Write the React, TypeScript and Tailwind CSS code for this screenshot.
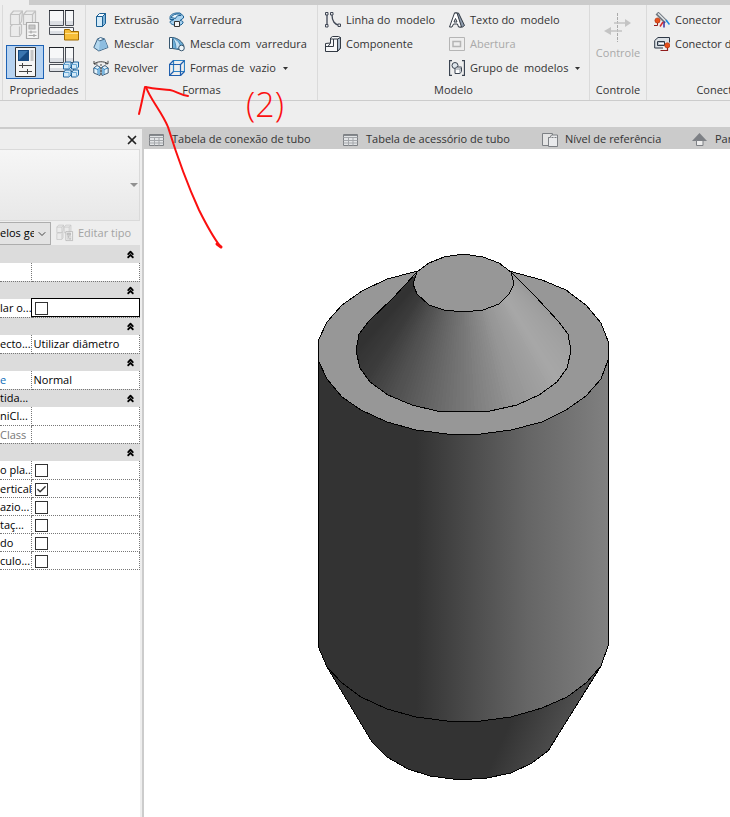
import React from 'react';
import { Check, ChevronDown, ChevronsUp, X } from 'lucide-react';
import clsx from 'clsx';

type Row =
  | { kind: 'header'; label: string }
  | { kind: 'text'; label: string; value: string; tone?: string }
  | { kind: 'check'; label: string; checked?: boolean; active?: boolean };

const rows: Row[] = [
  { kind: 'header', label: '' },
  { kind: 'text', label: '', value: '' },
  { kind: 'header', label: '' },
  { kind: 'check', label: 'lar o...', active: true },
  { kind: 'header', label: '' },
  { kind: 'text', label: 'ecto...', value: 'Utilizar diâmetro' },
  { kind: 'header', label: '' },
  { kind: 'text', label: 'e', value: 'Normal', tone: 'text-[#0a6ab8]' },
  { kind: 'header', label: 'tida...' },
  { kind: 'text', label: 'niCl...', value: '' },
  { kind: 'text', label: 'Class', value: '', tone: 'text-[#777777]' },
  { kind: 'header', label: '' },
  { kind: 'check', label: 'o pla...' },
  { kind: 'check', label: 'ertical', checked: true },
  { kind: 'check', label: 'azio...' },
  { kind: 'check', label: 'taç...' },
  { kind: 'check', label: 'do' },
  { kind: 'check', label: 'culo...' },
];

const icons = {
  extrusion: (
    <g stroke="#1b6094" strokeLinejoin="round">
      <path d="M3.500 4.500h6v10h-6z" fill="#d3eaf8" />
      <path d="M3.500 4.500l3-3h6l-3 3z" fill="#f4faff" />
      <path d="M9.500 4.500l3-3v10l-3 3z" fill="#7fb4da" />
    </g>
  ),
  blend: (
    <g stroke="#3d6485" strokeLinejoin="round">
      <path d="M4.500 3L.8 11.500l5 3.500L15 11.500 11.500 3z" fill="#b4d8ef" />
      <path d="M7 5l4.500-2L14.500 11.300 6 14.500z" fill="#8dbde0" stroke="none" />
      <path d="M4.500 3l3-1.500 4 1.500-5 2z" fill="#eaf5fc" />
    </g>
  ),
  revolve: (
    <g fill="none" stroke="#2f4a63" strokeWidth="0.900">
      <path d="M1 4C4 1.200 11 1 14.500 3.500M1 1v3h3.500M15 .8v3h-3" stroke="#333" />
      <path d="M.8 8L4 5.500l3 1.500v8.500L.8 13zM15.200 8L12 5.500 9 7v8.500l6.200-2.500z" fill="#e3f2fb" />
      <path d="M.8 8L5 9.500 7 7M15.200 8L11 9.500 9 7M5 9.500v5M11 9.500v5" stroke="#2576b4" />
      <path d="M5 9.500L7 7.500v7.500l-2-.5zM11 9.500L9 7.500v7.500l2-.5z" fill="#79b6e0" stroke="none" />
      <path d="M8 4v12" stroke="#333" strokeDasharray="2 1" />
    </g>
  ),
  sweep: (
    <g stroke="#1b6094" strokeLinejoin="round">
      <path d="M1 5.500c0-3 4-4.500 7-4.500h3l3.500 3v2L11 8.500c2 0 3.500 1 3 2.500l-2 2H5C1 12 1 10 1 9.500l4-2L1 7.500z" fill="#a9d2ee" />
      <path d="M2 5.500C3 3 7 1.500 10.500 2l1.500 1.500C9 3 7 4.500 6.500 6.500z" fill="#e9f5fc" />
      <path d="M5.500 9.500h5v5h-5z" fill="#f5f5f5" stroke="#333" />
    </g>
  ),
  sweptBlend: (
    <g stroke="#36566f">
      <path d="M.5 1.500h3v11h-3z" fill="#f3f8fb" />
      <path d="M3.500 1.500C9 2 14 6 15 10.500l-5 3-6.500-1z" fill="#6db0da" />
      <path d="M3.500 2C6 5 7 9 7 13l5-1.500C11 7 8 3 3.500 2z" fill="#c7e2f3" stroke="#4f8db8" />
      <circle cx="12.500" cy="12" r="2.800" fill="#eef5f9" />
    </g>
  ),
  voidForm: (
    <g stroke="#1f5fae" fill="none" strokeWidth="1.200">
      <path d="M4.500.5h11v11h-11z" stroke="#2e82c4" />
      <path d="M.5 4.500h11v11H.5z" />
      <path d="M.5 4.500l4-4M11.500 4.500l4-4M11.500 15.500l4-4M.5 15.500l4-4" />
    </g>
  ),
  modelLine: (
    <g fill="#eee" stroke="#414856">
      <path d="M2 3v10M7 3c0 6 3 10 7 10" fill="none" strokeWidth="1.300" />
      <path d="M.5.5h2.500v2.500H.5zM.5 12.500h2.500V15H.5zM5.500.5H8v2.500H5.500zM13 12h2.500v2.500H13z" />
    </g>
  ),
  component: (
    <g stroke="#333a44" strokeLinejoin="round">
      <path d="M.5 7.500L5.500 7V2l2-1.500h6l2 1V12l-3 3.500H.5z" fill="#f7f8f9" />
      <path d="M12.500 3v12.500l3-3.500V1.500z" fill="#aebccb" />
      <path d="M.5 10.500h8V3h4M5.500 3h3M5.500 7L3 10.500" fill="none" />
    </g>
  ),
  modelText: (
    <g stroke="#333a44" strokeLinejoin="round">
      <path d="M5.500 1h4l6 12.500-2 1.500h-3L6 8z" fill="#8e9cad" />
      <path d="M5.500 1h2.500l4.500 14h-3L8.500 12h-4L3 15H.5z" fill="#fff" />
      <path d="M6.500 6.500L5 10h3z" fill="#eee" />
    </g>
  ),
  opening: (
    <g stroke="#b5b5b5" fill="none">
      <path d="M.5 1.500h15v13H.5z" />
      <path d="M4 5.500h7.500v5H4z" strokeWidth="1.500" />
    </g>
  ),
  modelGroup: (
    <g fill="none" stroke="#3a4350">
      <path d="M3 .5H.5v15H3M13 .5h2.500v15H13" strokeWidth="1.300" />
      <circle cx="6" cy="5.500" r="3" fill="#dfe6ec" />
      <path d="M6 9l1.500-2h5v4.500L11 13.500H6z" fill="#fff" />
      <path d="M6 9h5v4.500M11 9l1.500-2" stroke="#8a939e" />
    </g>
  ),
  pipeConnector: (
    <g>
      <path d="M3 1l9 9" stroke="#70777f" strokeWidth="4" />
      <path d="M4 1.500l8 8" stroke="#e4e8eb" strokeWidth="1.500" />
      <path d="M12 8l3.500 4.500" stroke="#1b87dd" strokeWidth="1.500" />
      <path d="M10 9.500v6" stroke="#3730a3" strokeWidth="1.500" />
      <path d="M9 10l-3 4.500" stroke="#d92c2c" strokeWidth="1.500" />
      <path d="M3.500 9v4.500H0" stroke="#8f1b1b" fill="none" />
      <circle cx="3.500" cy="8.500" r="2.600" fill="#e8501c" stroke="#a5310e" strokeWidth=".6" />
    </g>
  ),
  ductConnector: (
    <g>
      <path d="M.7 4.500L4 1.500h11.500v5M.7 4.500v7.500H9" fill="#dbe0e5" stroke="#2e3846" />
      <path d="M3.500 5.500h7v4h-7z" fill="#b4bcc5" stroke="#2e3846" />
      <path d="M5 7.500h5" stroke="#fff" />
      <path d="M13.500 10v4.500H6.500" stroke="#8f1b1b" fill="none" strokeWidth="1.200" />
      <circle cx="13.300" cy="9.300" r="2.600" fill="#e8501c" stroke="#a5310e" strokeWidth=".6" />
    </g>
  ),
  schedule: (
    <g stroke="#7d8084">
      <path d="M.5 2.500h14v11H.5z" fill="#e2e4e6" />
      <path d="M.5 5.500h14M.5 8.500h14M.5 11h14M5.500 5v8.500M10 5v8.500" stroke="#a4a7ab" />
      <path d="M1 3.500h13" stroke="#85898d" />
    </g>
  ),
  level: (
    <g stroke="#7d8084">
      <path d="M.5 1.500h10v12H.5z" fill="#e4e4e4" />
      <path d="M6.500 14.500V5.500H8L9.500 3h6v11.500z" fill="#e9eaec" />
      <path d="M6.500 5.500h9" strokeDasharray="2 1" />
    </g>
  ),
  home: (
    <g>
      <path d="M7.500 1L0 9h15z" fill="#7d8085" />
      <path d="M4.500 8.500h6.500v5H4.500z" fill="#ececec" stroke="#7d8085" />
    </g>
  ),
};

type IconName = keyof typeof icons;

function Icon({ name }: { name: IconName }) {
  return (
    <svg viewBox="0 0 16 16" className="h-4 w-4 shrink-0" fill="none" aria-hidden="true">
      {icons[name]}
    </svg>
  );
}

function RibbonButton({ icon, label, menu, disabled }: { icon: IconName; label: string; menu?: boolean; disabled?: boolean }) {
  return (
    <button
      type="button"
      disabled={disabled}
      className={clsx('flex h-6 items-center gap-[5px] whitespace-pre', disabled && 'text-[#a9a9a9]')}
    >
      <Icon name={icon} />
      {label}
      {menu && (
        <svg viewBox="0 0 5 3" className="ml-0.5 h-[3px] w-[5px]" aria-hidden="true">
          <path d="M0 0h5L2.500 3z" fill="#333" />
        </svg>
      )}
    </button>
  );
}

function Panel({ title, className, children }: { title: string; className: string; children: React.ReactNode }) {
  return (
    <section className={clsx('flex shrink-0 flex-col border-r border-[#dadada]', className)}>
      <div className="flex h-[76px] items-start pt-[3px]">{children}</div>
      <h2 className="text-center leading-[18px]">{title}</h2>
    </section>
  );
}

function Windows({ children }: { children?: React.ReactNode }) {
  return (
    <svg viewBox="0 0 32 32" className="h-8 w-8" aria-hidden="true">
      <g stroke="#4a4e56" fill="#f6f7f8">
        <path d="M1.500 1.500h14v15h-14zM17.500 1.500h8v15h-8zM1.500 18.500h24v7h-24z" />
        <path d="M2 12h13v4H2zM18 12h7v4h-7zM2 22h23v3H2z" fill="#dcdfe4" stroke="none" />
        <path d="M1 1.500h15M17 1.500h9" stroke="#1d2026" />
      </g>
      {children}
    </svg>
  );
}

function Families({ className }: { className: string }) {
  return (
    <svg viewBox="0 0 32 32" className={className} aria-hidden="true">
      <g stroke="#c2c2c2" fill="#ebebeb" strokeLinejoin="round" strokeWidth="1.200">
        <path d="M1.500 5.500l3-3.500h9l-1 10.500-2 3h-9zM14.500 5.500L17.500 2h9v11l-3 2.500h-9zM1.500 17.500l2-2h9v9l-2 3h-9z" />
        <path d="M1.500 5.500h9v10M10.500 5.500l3-3.500M14.500 5.500h9v9M23.500 5.500l3-3.500M10.500 17.500v9" fill="none" />
        <path d="M17.500 13.500h12v16h-12z" fill="#f4f4f4" stroke="#a8a8a8" />
        <path d="M20 16h6v4h-6z" fill="#c8c8c8" stroke="#b0b0b0" />
        <path d="M19.500 23h8M19.500 26.500h8M22 21.500v3M25 25v3" stroke="#a8a8a8" />
      </g>
    </svg>
  );
}

function PropertiesPanel() {
  return (
    <div className="grid grid-cols-2 gap-x-[3px] gap-y-[3px] pl-[3px]">
      <button type="button" disabled aria-label="Categoria e parâmetros" className="flex h-[34px] w-[38px] items-center justify-center">
        <Families className="h-8 w-8" />
      </button>
      <button type="button" aria-label="Tipos de família" className="flex h-[34px] w-[38px] items-center pl-px">
        <Windows>
          <path d="M16.500 20.500h5l1.500 2h7.500v8.500h-14z" fill="#f6bd38" stroke="#a06a00" />
          <path d="M17 24.500h13" stroke="#ffe08a" />
        </Windows>
      </button>
      <button
        type="button"
        aria-label="Painel de propriedades"
        className="flex h-[34px] w-[38px] items-center justify-center border border-[#1d62b5] bg-[#b7d3f1]"
      >
        <svg viewBox="0 0 24 32" className="h-8 w-6" aria-hidden="true">
          <path d="M2.500 1.500h20v29h-20z" fill="#f5f5f5" stroke="#333" />
          <path d="M5 4h11v11H5z" fill="#174b82" />
          <path d="M6 5h9l-9 9z" fill="#3a76b0" />
          <path d="M17.500 4h3v11h-3z" fill="#c5c5c5" />
          <path d="M6 19.500h13M6 25.500h13M9.500 17v5M14.500 23v5" stroke="#444" />
        </svg>
      </button>
      <button type="button" aria-label="Editor de famílias" className="flex h-[34px] w-[38px] items-center pl-px">
        <Windows>
          <g fill="#d5eaf8" stroke="#1e659f">
            <path d="M15.500 18.500l2-2.500h5.500v5l-2 2h-5.500zM23.500 18.500l2-2.500h5v5l-2 2h-5zM15.500 26.500l2-2.500h5.500v5l-2 2h-5.500zM23.500 26.500l2-2.500h5v5l-2 2h-5z" />
            <path d="M15.500 18.500H21v4.500M23.500 18.500h5v4.500M15.500 26.500H21V31M23.500 26.500h5V31" fill="none" stroke="#6aa9d6" />
          </g>
        </Windows>
      </button>
    </div>
  );
}

function Ribbon() {
  return (
    <header className="flex h-24 overflow-hidden border-b border-[#cccccc]">
      <div className="w-[3px] shrink-0 border-r border-[#dadada]" />
      <Panel title="Propriedades" className="w-[83px]">
        <PropertiesPanel />
      </Panel>
      <Panel title="Formas" className="w-[232px]">
        <div className="w-[83px] shrink-0 pl-[7px]">
          <RibbonButton icon="extrusion" label="Extrusão" />
          <RibbonButton icon="blend" label="Mesclar" />
          <RibbonButton icon="revolve" label="Revolver" />
        </div>
        <div>
          <RibbonButton icon="sweep" label="Varredura" />
          <RibbonButton icon="sweptBlend" label="Mescla com  varredura" />
          <RibbonButton icon="voidForm" label="Formas de  vazio" menu />
        </div>
      </Panel>
      <Panel title="Modelo" className="w-[272px]">
        <div className="w-[131px] shrink-0 pl-[7px]">
          <RibbonButton icon="modelLine" label="Linha do  modelo" />
          <RibbonButton icon="component" label="Componente" />
        </div>
        <div>
          <RibbonButton icon="modelText" label="Texto do  modelo" />
          <RibbonButton icon="opening" label="Abertura" disabled />
          <RibbonButton icon="modelGroup" label="Grupo de  modelos" menu />
        </div>
      </Panel>
      <Panel title="Controle" className="w-[57px]">
        <button type="button" disabled className="flex w-full flex-col items-center pt-1 text-[#a9a9a9]">
          <svg viewBox="0 0 32 32" className="h-8 w-8" fill="none" aria-hidden="true">
            <path d="M15.500 1v29" stroke="#aaa" strokeDasharray="3 1" />
            <path d="M12 11h12M20 19H8" stroke="#c4c4c4" strokeWidth="1.500" />
            <path d="M23 7l6 4-6 4zM9 15l-7 4 7 4z" fill="#c4c4c4" />
          </svg>
          <span className="leading-[18px]">Controle</span>
        </button>
      </Panel>
      <Panel title="Conectores" className="w-[158px]">
        <div className="pl-[7px]">
          <RibbonButton icon="pipeConnector" label="Conector" />
          <RibbonButton icon="ductConnector" label="Conector de  duto" />
        </div>
      </Panel>
    </header>
  );
}

function PropertyGrid() {
  return (
    <table className="w-full table-fixed border-collapse text-black">
      <colgroup>
        <col className="w-[31px]" />
        <col />
      </colgroup>
      <tbody>
        {rows.map((row, i) =>
          row.kind === 'header' ? (
            <tr key={i} className="h-[18px] bg-[#dcdcdc]">
              <th colSpan={2} scope="colgroup" className="p-0 font-normal">
                <div className="flex h-[17px] items-center justify-between pr-1">
                  <span>{row.label}</span>
                  <ChevronsUp className="h-[11px] w-[11px]" strokeWidth={4} />
                </div>
              </th>
            </tr>
          ) : (
            <tr key={i} className="h-[18px] bg-white">
              <th scope="row" className="overflow-hidden border-r border-b border-dotted border-[#777777] p-0 text-left font-normal whitespace-nowrap">
                <div className={clsx('h-[17px] leading-[18px]', row.kind === 'text' && row.tone)}>
                  {row.kind === 'check' ? <label htmlFor={`prop-${i}`}>{row.label}</label> : row.label}
                </div>
              </th>
              <td className="border-r border-b border-dotted border-[#777777] p-0">
                {row.kind === 'check' ? (
                  <div className={clsx('relative flex h-[17px] items-start pt-[3px] pl-[3px]', row.active && 'outline outline-black')}>
                    <input
                      id={`prop-${i}`}
                      type="checkbox"
                      defaultChecked={row.checked}
                      className="peer h-[13px] w-[13px] appearance-none border border-[#333333] bg-white"
                    />
                    <Check className="pointer-events-none absolute top-1 left-1 hidden h-[11px] w-[11px] text-[#333333] peer-checked:block" strokeWidth={3} />
                  </div>
                ) : (
                  <div className="h-[17px] pl-0.5 leading-[18px] whitespace-nowrap">{row.value}</div>
                )}
              </td>
            </tr>
          ),
        )}
      </tbody>
    </table>
  );
}

function Sidebar() {
  return (
    <aside className="w-36 shrink-0 border-t-2 border-r-2 border-[#cccccc]">
      <div className="flex h-5 items-center justify-end pt-px pr-[3px]">
        <button type="button" aria-label="Fechar">
          <X className="h-[14px] w-[14px] text-[#222222]" strokeWidth={3} />
        </button>
      </div>
      <div className="mr-[2px] flex h-[72px] items-center justify-end border border-l-0 border-[#dadada] bg-linear-to-b from-[#f6f6f6] to-[#e8e8e8]">
        <svg viewBox="0 0 8 4" className="mr-px h-1 w-2" aria-hidden="true">
          <path d="M0 0h8L4 4z" fill="#909090" />
        </svg>
      </div>
      <div className="flex h-6 items-center">
        <div className="relative w-[51px]">
          <select
            aria-label="Filtro"
            className="h-[23px] w-full appearance-none border border-l-0 border-[#adadad] bg-[#e3e3e3] pr-4 text-black"
          >
            <option>elos ge</option>
          </select>
          <ChevronDown className="pointer-events-none absolute top-1.5 right-[3px] h-3 w-3 text-[#444444]" />
        </div>
        <button type="button" disabled className="ml-[5px] flex items-center gap-1 whitespace-nowrap text-[#a3a3a3]">
          <Families className="h-[18px] w-[18px]" />
          Editar tipo
        </button>
      </div>
      <div className="mr-[2px] bg-white pb-[248px]">
        <PropertyGrid />
      </div>
    </aside>
  );
}

const tabs: { icon: IconName; label: string; width: string }[] = [
  { icon: 'schedule', label: 'Tabela de conexão de tubo', width: 'w-[194px]' },
  { icon: 'schedule', label: 'Tabela de acessório de tubo', width: 'w-[199px]' },
  { icon: 'level', label: 'Nível de referência', width: 'w-[150px]' },
  { icon: 'home', label: 'Parede', width: 'w-[80px]' },
];

// [angle around the cone, grey level]
const coneShades: [number, number][] = [
  [-40, 148],
  [0, 160],
  [30, 167],
  [60, 150],
  [90, 118],
  [120, 88],
  [150, 60],
  [175, 50],
  [220, 52],
];

function shadeAt(angle: number) {
  const next = coneShades.findIndex(([a]) => a >= angle);
  if (next <= 0) return coneShades[0][1];
  const [a0, s0] = coneShades[next - 1];
  const [a1, s1] = coneShades[next];
  return Math.round(s0 + ((angle - a0) / (a1 - a0)) * (s1 - s0));
}

function coneFacets() {
  const point = (deg: number, rx: number, ry: number, cy: number) => {
    const t = (deg * Math.PI) / 180;
    return `${(463.5 + rx * Math.cos(t)).toFixed(1)},${(cy + ry * Math.sin(t)).toFixed(1)}`;
  };
  const step = 2;
  const facets: { points: string; fill: string }[] = [];
  for (let a = -40; a < 220; a += step) {
    const s = shadeAt(a);
    facets.push({
      points: [point(a, 48, 27, 283), point(a + step + 1, 48, 27, 283), point(a + step + 1, 112, 66, 351), point(a, 112, 66, 351)].join(' '),
      fill: `rgb(${s},${s},${s})`,
    });
  }
  return facets;
}

const RIM_FRONT = '318,360 327,379 342,397 361,410 387,422 416,430 447,434 481,434 511,430 542,422 566,410 586,396 601,379 608,360';
const CONE = '356,351 360,368 370,382 388,395 412,405 437,411 463,412 490,411 517,405 539,395 557,382 567,368 571,351 568,334 558,321 535,296 511,272 417,272 393,298 369,321 359,334';

function Solid() {
  return (
    <svg viewBox="317 253 293 528" className="h-[528px] w-[293px] shrink-0" shapeRendering="crispEdges" role="img" aria-label="Modelo 3D">
      <defs>
        <linearGradient id="body">
          <stop offset="0.340" stopColor="#333" />
          <stop offset="0.440" stopColor="#404040" />
          <stop offset="0.720" stopColor="#656565" />
          <stop offset="1" stopColor="#808080" />
        </linearGradient>
        <linearGradient id="tip" gradientUnits="userSpaceOnUse" x1="510" y1="722" x2="590" y2="757">
          <stop offset="0" stopColor="#333" />
          <stop offset="1" stopColor="#606060" />
        </linearGradient>
        <clipPath id="cone">
          <polygon points={CONE} />
        </clipPath>
      </defs>
      <g stroke="#000" strokeLinejoin="round">
        <polygon
          fill="url(#tip)"
          points="327,667 372,742 387,757 408,769 430,776 453,779 472,779 487,778 511,773 532,763 548,751 601,666"
        />
        <polygon
          fill="url(#body)"
          points="318,341 318,646 327,667 342,683 361,697 387,709 416,717 447,721 481,721 511,717 542,708 567,697 586,683 601,666 608,646 608,341"
        />
        <polygon
          fill="#979797"
          points={`318,341 ${RIM_FRONT} 608,341 601,323 586,305 566,290 542,280 509,271 418,271 387,279 362,291 342,305 327,322`}
        />
        <g clipPath="url(#cone)" stroke="none">
          {coneFacets().map((f) => (
            <polygon key={f.points} points={f.points} fill={f.fill} />
          ))}
        </g>
        <polygon fill="none" points={CONE} />
        <polygon
          fill="#979797"
          points="463,254 483,257 499,263 511,272 514,284 509,294 499,304 483,310 463,312 444,310 429,305 417,294 413,284 417,272 429,263 444,257"
        />
      </g>
    </svg>
  );
}

function Annotation() {
  return (
    <div className="pointer-events-none absolute top-0 left-0 text-[#fb1010]">
      <svg viewBox="0 0 300 255" className="h-[255px] w-[300px]" fill="none" stroke="currentColor" strokeWidth="2" strokeLinecap="round" strokeLinejoin="round" aria-hidden="true">
        <path d="M146 87c4 12 16 25 22 40 9 29 20 59 31 83 8 16 14 27 21 36" />
        <path d="M139 114c2-8 4-18 6-27 10 2 18 2 25 3 6 1 10 5 18 6" />
        <path d="M217 244l4 3" strokeWidth="3" />
      </svg>
      <span className="absolute top-[84px] left-[246px] font-['Open_Sans',sans-serif] text-[34px] leading-10 font-light">(2)</span>
    </div>
  );
}

export default function App() {
  return (
    <div className="relative flex min-h-screen flex-col overflow-hidden bg-[#eeeeee] font-['Open_Sans','Noto_Sans',sans-serif] text-[11px] text-[#333333]">
      <div className="flex h-[5px] shrink-0">
        <div className="w-[29px]" />
        <div className="flex-1 bg-[#cbcbcb]" />
      </div>
      <Ribbon />
      <div className="h-[26px] shrink-0" />
      <div className="flex flex-1">
        <Sidebar />
        <main className="flex min-w-0 flex-1 flex-col bg-white">
          <nav className="flex h-[22px] shrink-0 overflow-hidden bg-[#cbcbcb] pt-[3px] pl-[5px]">
            {tabs.map((tab) => (
              <a key={tab.label} href="#" className={clsx('flex shrink-0 items-center gap-[7px] whitespace-nowrap', tab.width)}>
                <Icon name={tab.icon} />
                {tab.label}
              </a>
            ))}
          </nav>
          <div className="pt-[104px] pl-[173px]">
            <Solid />
          </div>
        </main>
      </div>
      <Annotation />
    </div>
  );
}
